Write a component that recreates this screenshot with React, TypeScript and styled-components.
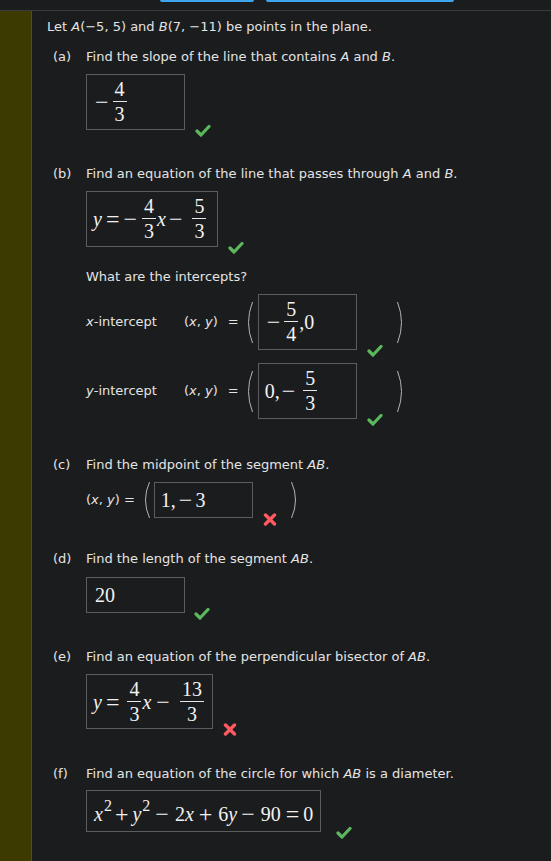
import { FC, ReactNode } from "react"
import styled, { createGlobalStyle } from "styled-components"

const GlobalStyle = createGlobalStyle`
    html, body {
        margin: 0;
        padding: 0;
        background: #1b1c1e;
    }
    body {
        font-family: "DejaVu Sans", Verdana, sans-serif;
        font-size: 13px;
        color: #e4e4e4;
    }
`

const Page = styled.div`
    min-height: 861px;
    display: flex;
    flex-direction: column;
`

const TopBar = styled.div`
    height: 10px;
    border-bottom: 1px solid #3a3b3d;
    display: flex;
    gap: 12px;
    padding-left: 160px;
`

const Tab = styled.div<{ $w: number }>`
    width: ${({ $w }) => $w}px;
    height: 2px;
    background: #3ea6ee;
    border-radius: 0 0 2px 2px;
`

const Main = styled.div`
    flex: 1;
    display: flex;
`

const Sidebar = styled.div`
    width: 31px;
    background: #3c3a00;
    border-right: 1px solid #4a4a44;
`

const Content = styled.div`
    flex: 1;
    padding: 8px 0 0 15px;
    line-height: 16px;
`

const Intro = styled.p`
    margin: 0 0 14px;
`

const I = styled.i`
    font-style: italic;
`

const Part = styled.section<{ $gap: number }>`
    display: flex;
    padding-left: 6px;
    margin-bottom: ${({ $gap }) => $gap}px;
`

const PartLabel = styled.div`
    width: 33px;
    flex-shrink: 0;
`

const PartBody = styled.div`
    display: flex;
    flex-direction: column;
    align-items: flex-start;
`

const Question = styled.div<{ $gap?: number; $top?: number }>`
    margin-top: ${({ $top }) => $top ?? 0}px;
    margin-bottom: ${({ $gap }) => $gap ?? 9}px;
`

const AnswerRow = styled.div`
    display: flex;
    align-items: center;
`

const MathBox = styled.div<{ $pad?: string; $ml?: number }>`
    display: inline-flex;
    align-items: center;
    box-sizing: border-box;
    min-width: 99px;
    margin-left: ${({ $ml }) => $ml ?? 0}px;
    padding: ${({ $pad }) => $pad ?? "5px 10px 5px 6px"};
    border: 1px solid #5b5d5f;
    font-family: "Liberation Serif", "DejaVu Serif", serif;
    font-size: 20px;
    line-height: 24px;
    color: #f2f2f2;
    white-space: nowrap;
`

const Var = styled.span`
    font-style: italic;
`

const Op = styled.span<{ $l?: number; $r?: number }>`
    font-size: 24px;
    margin-left: ${({ $l }) => $l ?? 0}px;
    margin-right: ${({ $r }) => $r ?? 0}px;
`

const PowWrap = styled.span`
    display: inline-block;
    line-height: 24px;
`

const Sup = styled.sup`
    font-size: 16px;
    line-height: 0;
    vertical-align: 10px;
    font-style: normal;
    margin-left: 1px;
`

const Pow: FC<{ base: string; exp: string }> = ({ base, exp }) => (
    <PowWrap>
        <Var>{base}</Var>
        <Sup>{exp}</Sup>
    </PowWrap>
)

const FracWrap = styled.span<{ $l?: number; $r?: number }>`
    display: inline-flex;
    flex-direction: column;
    align-items: center;
    margin-left: ${({ $l }) => $l ?? 1}px;
    margin-right: ${({ $r }) => $r ?? 1}px;
    line-height: 19px;
`

const Num = styled.span`
    padding: 0 2px 2px;
    border-bottom: 1px solid #e8e8e8;
`

const Den = styled.span`
    padding: 3px 2px 0;
`

const Frac: FC<{ n: ReactNode; d: ReactNode; l?: number; r?: number }> = ({ n, d, l, r }) => (
    <FracWrap $l={l} $r={r}>
        <Num>{n}</Num>
        <Den>{d}</Den>
    </FracWrap>
)

const MarkSlot = styled.span<{ $ml?: number }>`
    align-self: flex-end;
    display: inline-flex;
    margin: 0 0 -7px ${({ $ml }) => $ml ?? 10}px;
`

const Check: FC<{ ml?: number }> = ({ ml }) => (
    <MarkSlot $ml={ml}>
        <svg width="16" height="13" viewBox="0 0 16 13">
            <path d="M2 7 L6 11 L14 2.5" fill="none" stroke="#5cb85c" strokeWidth="3.2" strokeLinecap="round" strokeLinejoin="round" />
        </svg>
    </MarkSlot>
)

const Cross: FC<{ ml?: number }> = ({ ml }) => (
    <MarkSlot $ml={ml}>
        <svg width="14" height="13" viewBox="0 0 14 13">
            <path d="M2.5 2 L11.5 11 M11.5 2 L2.5 11" fill="none" stroke="#ff5a5f" strokeWidth="3.4" strokeLinecap="round" />
        </svg>
    </MarkSlot>
)

const ParenSvg = styled.svg<{ $ml?: number }>`
    flex-shrink: 0;
    display: block;
    margin-left: ${({ $ml }) => $ml ?? 0}px;
`

const Paren: FC<{ side: "l" | "r"; h: number; ml?: number }> = ({ side, h, ml }) => (
    <ParenSvg $ml={ml} width="10" height={h} viewBox={`0 0 10 ${h}`}>
        <path
            d={side === "l" ? `M8.5 1 Q0.5 ${h / 2} 8.5 ${h - 1}` : `M1.5 1 Q9.5 ${h / 2} 1.5 ${h - 1}`}
            fill="none"
            stroke="#b4b4b4"
            strokeWidth="1"
        />
    </ParenSvg>
)

const Intercepts = styled.div`
    display: flex;
    flex-direction: column;
    gap: 13px;
`

const InterceptLabel = styled.span`
    width: 98px;
`

const Coord = styled.span<{ $r: number }>`
    margin-right: ${({ $r }) => $r}px;
`

const Tuple = styled.div`
    display: flex;
    align-items: center;
`

const App: FC = () => {
    return (
        <Page>
            <GlobalStyle />
            <TopBar>
                <Tab $w={94} />
                <Tab $w={188} />
            </TopBar>
            <Main>
                <Sidebar />
                <Content>
                    <Intro>
                        Let <I>A</I>(−5, 5) and <I>B</I>(7, −11) be points in the plane.
                    </Intro>

                    <Part $gap={36}>
                        <PartLabel>(a)</PartLabel>
                        <PartBody>
                            <Question>Find the slope of the line that contains <I>A</I> and <I>B</I>.</Question>
                            <AnswerRow>
                                <MathBox>
                                    <Op $l={2} $r={3}>−</Op>
                                    <Frac n="4" d="3" />
                                </MathBox>
                                <Check />
                            </AnswerRow>
                        </PartBody>
                    </Part>

                    <Part $gap={38}>
                        <PartLabel>(b)</PartLabel>
                        <PartBody>
                            <Question>Find an equation of the line that passes through <I>A</I> and <I>B</I>.</Question>
                            <AnswerRow>
                                <MathBox>
                                    <Var>y</Var>
                                    <Op $l={4}>=</Op>
                                    <Op $l={4} $r={4}>−</Op>
                                    <Frac n="4" d="3" />
                                    <Var>x</Var>
                                    <Op $l={3} $r={9}>−</Op>
                                    <Frac n="5" d="3" />
                                </MathBox>
                                <Check />
                            </AnswerRow>
                            <Question $top={22}>What are the intercepts?</Question>
                            <Intercepts>
                                <AnswerRow>
                                    <InterceptLabel><I>x</I>-intercept</InterceptLabel>
                                    <Coord $r={10}>(<I>x</I>, <I>y</I>)</Coord>
                                    <Coord $r={5}>=</Coord>
                                    <Tuple>
                                        <Paren side="l" h={43} />
                                        <MathBox $ml={4}>
                                            <Op $l={2} $r={3}>−</Op>
                                            <Frac n="5" d="4" />
                                            <span>,0</span>
                                        </MathBox>
                                        <Check />
                                        <Paren side="r" h={43} ml={13} />
                                    </Tuple>
                                </AnswerRow>
                                <AnswerRow>
                                    <InterceptLabel><I>y</I>-intercept</InterceptLabel>
                                    <Coord $r={10}>(<I>x</I>, <I>y</I>)</Coord>
                                    <Coord $r={5}>=</Coord>
                                    <Tuple>
                                        <Paren side="l" h={43} />
                                        <MathBox $ml={4}>
                                            <span>0,</span>
                                            <Op $l={2} $r={7}>−</Op>
                                            <Frac n="5" d="3" />
                                        </MathBox>
                                        <Check />
                                        <Paren side="r" h={43} ml={13} />
                                    </Tuple>
                                </AnswerRow>
                            </Intercepts>
                        </PartBody>
                    </Part>

                    <Part $gap={32}>
                        <PartLabel>(c)</PartLabel>
                        <PartBody>
                            <Question $gap={8}>Find the midpoint of the segment <I>AB</I>.</Question>
                            <AnswerRow>
                                <Coord $r={6}>(<I>x</I>, <I>y</I>) =</Coord>
                                <Tuple>
                                    <Paren side="l" h={38} />
                                    <MathBox $ml={3}>
                                        <span>1,</span>
                                        <Op $l={3} $r={3}>−</Op>
                                        <span>3</span>
                                    </MathBox>
                                    <Cross ml={10} />
                                    <Paren side="r" h={38} ml={13} />
                                </Tuple>
                            </AnswerRow>
                        </PartBody>
                    </Part>

                    <Part $gap={36}>
                        <PartLabel>(d)</PartLabel>
                        <PartBody>
                            <Question $gap={10}>Find the length of the segment <I>AB</I>.</Question>
                            <AnswerRow>
                                <MathBox $pad="5px 10px 5px 8px">20</MathBox>
                                <Check ml={9} />
                            </AnswerRow>
                        </PartBody>
                    </Part>

                    <Part $gap={37}>
                        <PartLabel>(e)</PartLabel>
                        <PartBody>
                            <Question $gap={9}>Find an equation of the perpendicular bisector of <I>AB</I>.</Question>
                            <AnswerRow>
                                <MathBox $pad="5px 7px 4px 6px">
                                    <Var>y</Var>
                                    <Op $l={4} $r={7}>=</Op>
                                    <Frac n="4" d="3" />
                                    <Var>x</Var>
                                    <Op $l={5} $r={9}>−</Op>
                                    <Frac n="13" d="3" />
                                </MathBox>
                                <Cross ml={10} />
                            </AnswerRow>
                        </PartBody>
                    </Part>

                    <Part $gap={20}>
                        <PartLabel>(f)</PartLabel>
                        <PartBody>
                            <Question $gap={8}>Find an equation of the circle for which <I>AB</I> is a diameter.</Question>
                            <AnswerRow>
                                <MathBox $pad="11px 7px 5px 7px">
                                    <Pow base="x" exp="2" />
                                    <Op $l={3} $r={4}>+</Op>
                                    <Pow base="y" exp="2" />
                                    <Op $l={5} $r={6}>−</Op>
                                    <span>2</span><Var>x</Var>
                                    <Op $l={5} $r={6}>+</Op>
                                    <span>6</span><Var>y</Var>
                                    <Op $l={4} $r={6}>−</Op>
                                    <span>90</span>
                                    <Op $l={5} $r={4}>=</Op>
                                    <span>0</span>
                                </MathBox>
                                <Check ml={15} />
                            </AnswerRow>
                        </PartBody>
                    </Part>
                </Content>
            </Main>
        </Page>
    )
}

export default App
